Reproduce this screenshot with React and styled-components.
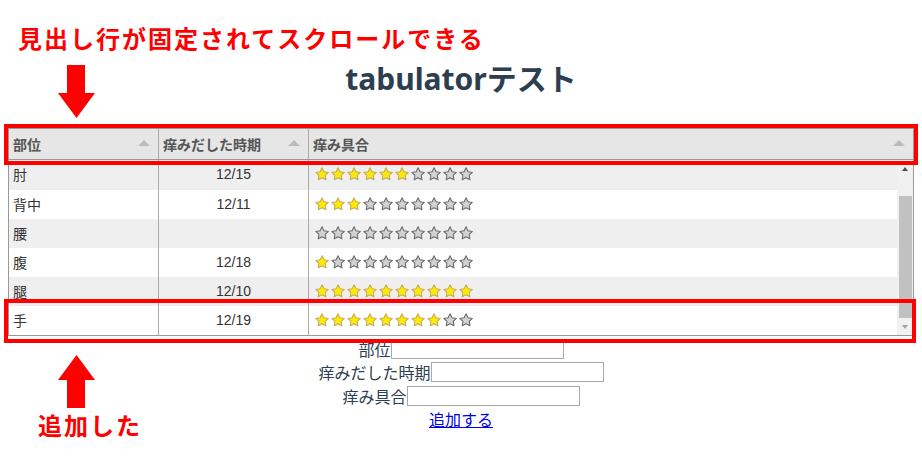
import React from "react";
import styled, { createGlobalStyle } from "styled-components";

const GlobalStyle = createGlobalStyle`
  html, body {
    margin: 0;
    padding: 0;
    background: #fff;
  }
  body {
    font-family: "Liberation Sans", "Noto Sans CJK JP", sans-serif;
  }
`;

const columns = [
  { title: "部位", width: 150 },
  { title: "痒みだした時期", width: 150 },
  { title: "痒み具合", width: null },
];

const rows = [
  { part: "肘", date: "12/15", stars: 6 },
  { part: "背中", date: "12/11", stars: 3 },
  { part: "腰", date: "", stars: 0 },
  { part: "腹", date: "12/18", stars: 1 },
  { part: "腿", date: "12/10", stars: 10 },
  { part: "手", date: "12/19", stars: 8 },
];

const STAR_POINTS =
  "259.216,29.942 330.27,173.919 489.16,197.007 374.185,309.08 401.33,467.31 259.216,392.612 117.104,467.31 144.25,309.08 29.274,197.007 188.165,173.919";

const Star = ({ active }) => (
  <StarSvg viewBox="0 0 512 512">
    <polygon
      fill={active ? "#FFEA00" : "#D2D2D2"}
      stroke={active ? "#C1AB60" : "#686868"}
      strokeWidth="37.6152"
      strokeLinecap="round"
      strokeLinejoin="round"
      strokeMiterlimit="10"
      points={STAR_POINTS}
    />
  </StarSvg>
);

const Stars = ({ value }) => (
  <StarRow>
    {Array.from({ length: 10 }, (_, i) => (
      <Star key={i} active={i < value} />
    ))}
  </StarRow>
);

const App = () => {
  return (
    <Page>
      <GlobalStyle />
      <Title>tabulatorテスト</Title>

      <Table>
        <Header>
          {columns.map((c) => (
            <HeadCell key={c.title} $w={c.width}>
              <span>{c.title}</span>
              <SortArrow />
            </HeadCell>
          ))}
        </Header>
        <Body>
          <Rows>
            {rows.map((r, i) => (
              <Row key={r.part} $alt={i % 2 === 0}>
                <Cell $w={150}>{r.part}</Cell>
                <Cell $w={150} $center>
                  {r.date}
                </Cell>
                <Cell $last>
                  <Stars value={r.stars} />
                </Cell>
              </Row>
            ))}
          </Rows>
          <Scrollbar>
            <ScrollButton>
              <ScrollTri $up />
            </ScrollButton>
            <Track>
              <Thumb />
            </Track>
            <ScrollButton>
              <ScrollTri />
            </ScrollButton>
          </Scrollbar>
        </Body>
      </Table>

      <Form>
        <FormRow>
          <Label>部位</Label>
          <Input type="text" />
        </FormRow>
        <FormRow>
          <Label>痒みだした時期</Label>
          <Input type="text" />
        </FormRow>
        <FormRow>
          <Label>痒み具合</Label>
          <Input type="text" />
        </FormRow>
        <FormRow>
          <AddLink href="#">追加する</AddLink>
        </FormRow>
      </Form>

      {/* annotations drawn over the screenshot */}
      <Note $top={26} $left={18}>
        見出し行が固定されてスクロールできる
      </Note>
      <ArrowSvg $top={65} viewBox="0 0 37 53">
        <polygon points="9,0 27,0 27,28 37,28 18.5,53 0,28 9,28" fill="#ff0000" />
      </ArrowSvg>
      <RedBox $top={124} $left={4} $w={914} $h={41} />
      <RedBox $top={299} $left={4} $w={912} $h={44} />
      <ArrowSvg $top={355} viewBox="0 0 37 53">
        <polygon points="18.5,0 37,25 27,25 27,53 9,53 9,25 0,25" fill="#ff0000" />
      </ArrowSvg>
      <Note $top={413} $left={38}>
        追加した
      </Note>
    </Page>
  );
};

const Page = styled.div`
  position: relative;
  width: 922px;
  height: 459px;
  box-sizing: border-box;
  padding: 59px 8px 0;
  overflow: hidden;
`;

const Title = styled.h1`
  margin: 0;
  font-family: "Noto Sans", "Noto Sans CJK JP", sans-serif;
  font-size: 30px;
  line-height: 40px;
  font-weight: 700;
  text-align: center;
  color: #2c3e50;
`;

const Table = styled.div`
  margin-top: 29px;
  border: 1px solid #999;
  background: #fff;
  font-size: 14px;
  color: #333;
`;

const Header = styled.div`
  display: flex;
  height: 30px;
  background: #e6e6e6;
  border-bottom: 1px solid #999;
  color: #555;
  font-family: "Noto Sans CJK JP", sans-serif;
  font-weight: 700;
`;

const HeadCell = styled.div`
  display: flex;
  align-items: center;
  justify-content: space-between;
  box-sizing: border-box;
  padding: 0 8px 0 4px;
  ${(p) => (p.$w ? `width: ${p.$w}px; border-right: 1px solid #aaa;` : "flex: 1;")}
`;

const SortArrow = styled.span`
  width: 0;
  height: 0;
  border-left: 6px solid transparent;
  border-right: 6px solid transparent;
  border-bottom: 6px solid #bbb;
  margin-top: -2px;
`;

const Body = styled.div`
  display: flex;
`;

const Rows = styled.div`
  flex: 1;
  display: flex;
  flex-direction: column;
`;

const Row = styled.div`
  display: flex;
  height: 29px;
  background: ${(p) => (p.$alt ? "#efefef" : "#fff")};
  &:first-child {
    height: 30px;
  }
`;

const Cell = styled.div`
  display: flex;
  align-items: center;
  justify-content: ${(p) => (p.$center ? "center" : "flex-start")};
  box-sizing: border-box;
  padding: 0 4px 2px;
  ${(p) => (p.$w ? `width: ${p.$w}px; border-right: 1px solid #aaa;` : "flex: 1;")}
  ${(p) => (p.$last ? "padding-left: 5px;" : "")}
`;

const StarRow = styled.div`
  display: flex;
`;

const StarSvg = styled.svg`
  width: 14px;
  height: 14px;
  margin: 0 1px;
  display: block;
`;

const Scrollbar = styled.div`
  width: 16px;
  display: flex;
  flex-direction: column;
  background: #f1f1f1;
`;

const ScrollButton = styled.div`
  height: 17px;
  display: flex;
  align-items: center;
  justify-content: center;
`;

const ScrollTri = styled.span`
  width: 0;
  height: 0;
  border-left: 3.5px solid transparent;
  border-right: 3.5px solid transparent;
  ${(p) =>
    p.$up
      ? "border-bottom: 4px solid #505050; margin-top: 1px;"
      : "border-top: 4px solid #a3a3a3; margin-top: 1px;"}
`;

const Track = styled.div`
  flex: 1;
  display: flex;
  flex-direction: column;
  justify-content: flex-end;
  padding: 0 1px 0 2px;
`;

const Thumb = styled.div`
  height: 122px;
  background: #c1c1c1;
`;

const Form = styled.div`
  padding-top: 1px;
  font-family: "Noto Sans CJK JP", sans-serif;
  font-size: 16px;
  color: #2c3e50;
`;

const FormRow = styled.div`
  height: 23.5px;
  display: flex;
  align-items: center;
  justify-content: center;
`;

const Label = styled.label`
  line-height: 20px;
  white-space: nowrap;
`;

const Input = styled.input`
  width: 173px;
  height: 20px;
  box-sizing: border-box;
  border: 1px solid #a9a9a9;
  padding: 0 2px;
  margin: 0;
  background: #fff;
  outline: none;
`;

const AddLink = styled.a`
  color: #0000ee;
  text-decoration: underline;
  line-height: 20px;
`;

const Note = styled.div`
  position: absolute;
  top: ${(p) => p.$top}px;
  left: ${(p) => p.$left}px;
  font-family: "Noto Sans CJK JP", sans-serif;
  font-weight: 700;
  font-size: 24px;
  line-height: 24px;
  letter-spacing: 2px;
  color: #ff0000;
  white-space: nowrap;
`;

const RedBox = styled.div`
  position: absolute;
  top: ${(p) => p.$top}px;
  left: ${(p) => p.$left}px;
  width: ${(p) => p.$w}px;
  height: ${(p) => p.$h}px;
  box-sizing: border-box;
  border: 4px solid #ff0000;
  pointer-events: none;
`;

const ArrowSvg = styled.svg`
  position: absolute;
  top: ${(p) => p.$top}px;
  left: 58px;
  width: 37px;
  height: 53px;
`;

export default App;
